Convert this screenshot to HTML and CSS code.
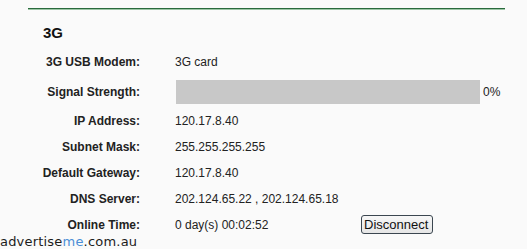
FILE: index.html
```html
<!DOCTYPE html>
<html>
<head>
<meta charset="utf-8">
<link rel="stylesheet" href="styles.css">
</head>
<body>
<div class="panel">
  <div class="rule"></div>
  <h2 class="title">3G</h2>
  <div class="grid">
    <div class="lbl">3G USB Modem:</div>
    <div class="val">3G card</div>

    <div class="lbl">Signal Strength:</div>
    <div class="val"><div class="bar"></div><span class="pct">0%</span></div>

    <div class="lbl">IP Address:</div>
    <div class="val">120.17.8.40</div>

    <div class="lbl">Subnet Mask:</div>
    <div class="val">255.255.255.255</div>

    <div class="lbl">Default Gateway:</div>
    <div class="val">120.17.8.40</div>

    <div class="lbl">DNS Server:</div>
    <div class="val">202.124.65.22 , 202.124.65.18</div>

    <div class="lbl">Online Time:</div>
    <div class="val"><span class="time">0 day(s) 00:02:52</span><button class="btn">Disconnect</button></div>
  </div>
</div>
<div class="wm">advertise<span class="me">me</span>.com.au</div>
</body>
</html>
```
FILE: styles.css
```css
html, body {
  margin: 0;
  padding: 0;
  background: #fafafa;
  width: 527px;
  height: 249px;
  overflow: hidden;
  font-family: "Liberation Sans", Arial, sans-serif;
  color: #1a1a1a;
}
.panel {
  padding: 8px 22px 0 28px;
}
.rule {
  height: 1px;
  background: #2a6a3c;
  border-bottom: 1px solid #9cc6a6;
}
.title {
  margin: 14px 0 0 15px;
  font-size: 15px;
  font-weight: bold;
  line-height: 17px;
  height: 17px;
  color: #111;
}
.grid {
  margin-top: 8px;
  display: grid;
  grid-template-columns: 112px 1fr;
  grid-template-rows: 26px 33px 26px 26px 26px 26px 26px;
  column-gap: 35px;
  font-size: 12px;
}
.lbl {
  font-weight: bold;
  display: flex;
  align-items: center;
  justify-content: flex-end;
  color: #222;
}
.val {
  display: flex;
  align-items: center;
  color: #222;
}
.bar {
  width: 304px;
  height: 24px;
  background: #c8c8c8;
  margin-left: 1px;
}
.pct {
  margin-left: 3px;
}
.time {
  width: 186px;
}
.btn {
  font-family: "Liberation Sans", Arial, sans-serif;
  font-size: 13px;
  height: 19px;
  width: 72px;
  padding: 0 2px;
  margin: -2px 0 0 0;
  border: 1px solid #3b4650;
  border-radius: 3px;
  background: linear-gradient(#f7f7f7, #e6e6e6);
  color: #111;
  text-align: left;
  line-height: 17px;
}
.wm {
  position: absolute;
  left: 0;
  top: 234px;
  font-family: "DejaVu Sans", sans-serif;
  font-size: 13px;
  letter-spacing: 0.2px;
  color: #1c1c1c;
}
.me {
  color: #4a8ed6;
}
```
